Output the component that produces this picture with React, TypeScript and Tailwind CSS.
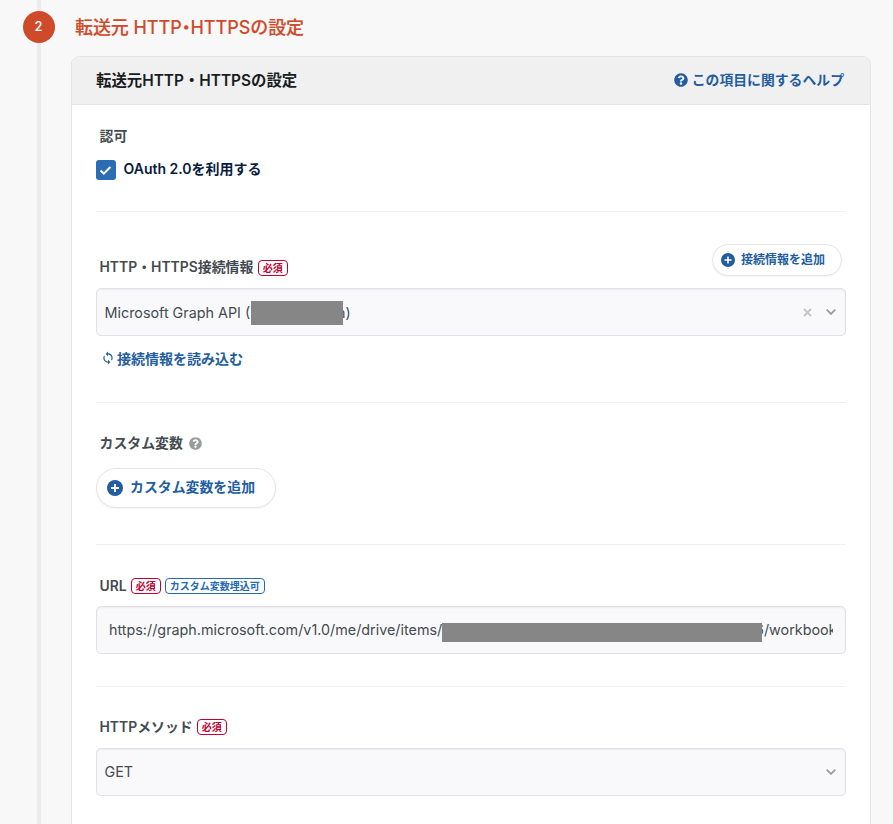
import type { ReactNode } from "react";
import { FaQuestionCircle } from "react-icons/fa";
import { MdLoop } from "react-icons/md";

function Divider() {
  return <div className="h-px bg-[#f0f0f1]" />;
}

function Badge({ children, tone }: { children: ReactNode; tone: "required" | "info" }) {
  return (
    <span
      className={
        "flex h-4 items-center rounded-[4px] border px-1 text-[10px] leading-none font-bold " +
        (tone === "required" ? "border-[#c2002f] text-[#c2002f]" : "border-[#2569af] text-[#2569af]")
      }
    >
      {children}
    </span>
  );
}

function Label({ children }: { children: ReactNode }) {
  return <span className="text-[13.9px] leading-5 font-semibold text-[#444b50]">{children}</span>;
}

function Chevron() {
  return (
    <svg width="10" height="6" viewBox="0 0 10 6" fill="none" stroke="#999b9d" strokeWidth="1.8">
      <path d="M0.7 0.7 5 4.9 9.3 0.7" />
    </svg>
  );
}

function PlusIcon({ size }: { size: number }) {
  return (
    <svg width={size} height={size} viewBox="0 0 16 16" className="shrink-0">
      <circle cx="8" cy="8" r="8" fill="#235d9f" />
      <path d="M8 4v8M4 8h8" stroke="#fff" strokeWidth="1.8" />
    </svg>
  );
}

const fieldClass =
  "flex h-12 items-center rounded-[5px] border border-[#e0e1e4] bg-[#f9f9fb] text-[14.35px] text-[#444b50] shadow-[inset_0_1px_2px_rgba(0,0,0,0.06)]";

export default function App() {
  return (
    <div className="flex h-[824px] w-[893px] overflow-hidden bg-[#f8f8f8] font-['Inter','Noto_Sans_CJK_JP',sans-serif]">
      <div className="relative ml-[23px] flex w-8 shrink-0 justify-center">
        <div className="h-full w-1 bg-[#ebebeb]" />
        <div className="absolute top-[11px] flex size-8 items-center justify-center rounded-full bg-[#cf4a2a] pr-px text-[13px] font-medium text-white">
          2
        </div>
      </div>

      <div className="ml-4 w-[800px]">
        <h1 className="flex h-14 items-center pl-1 text-[18px] leading-none font-medium tracking-[-0.08px] whitespace-pre text-[#cf4a2a]">
          <span className="[-webkit-text-stroke:0.2px]">転送元</span>
          {" HTTP"}
          <span className="[-webkit-text-stroke:1px]">･</span>
          HTTPS
          <span className="[-webkit-text-stroke:0.2px]">の設定</span>
        </h1>

        <section className="h-[800px] rounded-t-lg border border-[#e4e5e6] bg-white">
          <header className="flex h-12 items-center justify-between rounded-t-[7px] border-b border-[#e4e5e6] bg-[#f0f0f0] pr-[26px] pl-6">
            <h2 className="pt-px text-[15.4px] font-semibold text-[#181d21]">転送元HTTP・HTTPSの設定</h2>
            <a className="flex items-center gap-1 text-[13.85px] font-semibold text-[#235d9f]">
              <FaQuestionCircle size={14} />
              この項目に関するヘルプ
            </a>
          </header>

          <div className="px-6">
            <div className="h-[106px] pt-[21px]">
              <div className="flex h-5 items-center pl-[3.5px]"><Label>認可</Label></div>
              <label className="mt-[14px] flex h-5 items-center gap-[7.5px] text-[14px] font-semibold text-[#071c40]">
                <span className="flex size-5 items-center justify-center rounded-[3px] bg-[#2a6db3]">
                  <svg width="12" height="10" viewBox="0 0 12 10" fill="none" stroke="#fff" strokeWidth="2">
                    <path d="M0.5 5.5 3.8 8.6 10.4 2" />
                  </svg>
                </span>
                <span className="pb-[3px]">OAuth 2.0を利用する</span>
              </label>
            </div>
            <Divider />

            <div className="h-[190px] pt-8">
              <div className="flex h-8 items-center justify-between pr-1 pl-[3.5px]">
                <div className="mt-[14px] flex items-center gap-[4.5px]">
                  <Label>HTTP・HTTPS接続情報</Label>
                  <span className="pt-[2px]"><Badge tone="required">必須</Badge></span>
                </div>
                <button type="button" className="flex h-8 w-[130px] items-center gap-[6px] rounded-full border border-[#e4e5e6] bg-white pl-2 text-[12px] font-semibold text-[#235d9f] shadow-[0_1px_2px_rgba(0,0,0,0.05)]">
                  <PlusIcon size={14} />
                  接続情報を追加
                </button>
              </div>
              <div className={`${fieldClass} mt-3 justify-between pr-[9px] pl-[7.5px]`}>
                <div className="flex items-center pt-[2px]">
                  <span className="w-[146.5px] whitespace-nowrap">Microsoft Graph API (</span>
                  <span className="z-10 h-6 w-[92px] bg-[#868686]" />
                  <span className="-ml-[6px]">n)</span>
                </div>
                <div className="flex items-center gap-[14px]">
                  <svg width="9" height="9" viewBox="0 0 9 9" stroke="#c4c5c6" strokeWidth="1.8">
                    <path d="M1 1 8 8M8 1 1 8" />
                  </svg>
                  <Chevron />
                </div>
              </div>
              <a className="mt-3 flex h-5 items-center gap-[2px] pl-[5px] text-[14px] font-semibold text-[#235d9f]">
                <MdLoop size={14} className="mb-px" />
                <span className="pt-px">接続情報を読み込む</span>
              </a>
            </div>
            <Divider />

            <div className="h-[141px] pt-[30px]">
              <div className="flex h-5 items-center gap-[6px] pl-[3.5px]">
                <Label>カスタム変数</Label>
                <FaQuestionCircle size={13} className="mt-px text-[#999b9d]" />
              </div>
              <button type="button" className="mt-[15px] flex h-10 w-[180px] items-center gap-2 rounded-full border border-[#e4e5e6] bg-white pl-[10px] text-[13.9px] font-semibold text-[#235d9f] shadow-[0_1px_2px_rgba(0,0,0,0.05)]">
                <PlusIcon size={16} />
                <span className="-ml-px pb-px">カスタム変数を追加</span>
              </button>
            </div>
            <Divider />

            <div className="h-[141px] pt-[31px]">
              <div className="flex h-5 items-center gap-1 pl-[3.5px]">
                <Label>URL</Label>
                <Badge tone="required">必須</Badge>
                <Badge tone="info">カスタム変数埋込可</Badge>
              </div>
              <div className={`${fieldClass} mt-[10px] px-3`}>
                <div className="flex w-full items-center overflow-hidden whitespace-nowrap">
                  <span className="w-[333px] shrink-0">https://graph.microsoft.com/v1.0/me/drive/items/</span>
                  <span className="z-10 mt-1 h-[19px] w-[320px] shrink-0 bg-[#868686]" />
                  <span className="-ml-[7px]">6/workbook</span>
                </div>
              </div>
            </div>
            <Divider />

            <div className="pt-[30px]">
              <div className="flex h-5 items-center gap-1 pl-[3.5px]">
                <Label>HTTPメソッド</Label>
                <Badge tone="required">必須</Badge>
              </div>
              <div className={`${fieldClass} mt-[11px] justify-between pr-[9px] pl-[7.5px]`}>
                <span>GET</span>
                <Chevron />
              </div>
            </div>
          </div>
        </section>
      </div>
    </div>
  );
}
